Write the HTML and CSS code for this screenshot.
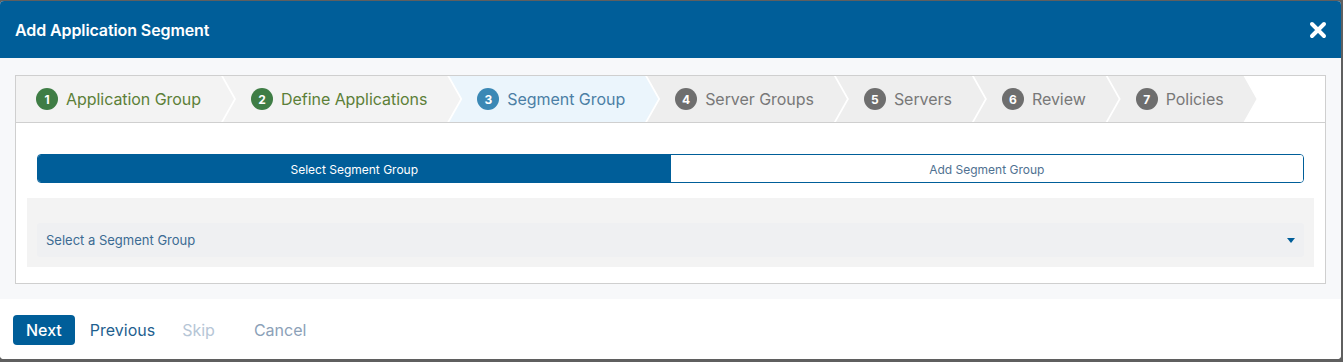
FILE: index.html
```html
<!DOCTYPE html>
<html lang="en">
<head>
<meta charset="utf-8">
<title>Add Application Segment</title>
<link rel="stylesheet" href="styles.css">
</head>
<body>
<div class="modal">
  <div class="header">
    <h1 class="title">Add Application Segment</h1>
    <button class="close" aria-label="Close">
      <svg width="18" height="18" viewBox="0 0 18 18"><path d="M3 3 L15 15 M15 3 L3 15" stroke="#fff" stroke-width="4" stroke-linecap="round" fill="none"/></svg>
    </button>
  </div>
  <div class="body">
    <div class="panel">
      <div class="steps">
        <div class="step done first"><span class="num">1</span><span class="label">Application Group</span></div>
        <div class="step done"><span class="num">2</span><span class="label">Define Applications</span></div>
        <div class="step active"><span class="num">3</span><span class="label">Segment Group</span></div>
        <div class="step"><span class="num">4</span><span class="label">Server Groups</span></div>
        <div class="step"><span class="num">5</span><span class="label">Servers</span></div>
        <div class="step"><span class="num">6</span><span class="label">Review</span></div>
        <div class="step"><span class="num">7</span><span class="label">Policies</span></div>
      </div>
      <div class="content">
        <div class="toggle">
          <div class="tab tab-active">Select Segment Group</div>
          <div class="tab">Add Segment Group</div>
        </div>
        <div class="field-box">
          <div class="select">
            <span class="placeholder">Select a Segment Group</span>
            <span class="caret"></span>
          </div>
        </div>
      </div>
    </div>
  </div>
  <div class="footer">
    <button class="btn-primary">Next</button>
    <button class="link link-prev">Previous</button>
    <button class="link link-skip">Skip</button>
    <button class="link link-cancel">Cancel</button>
  </div>
</div>
</body>
</html>
```

FILE: styles.css
```css
html, body {
  margin: 0;
  padding: 0;
}
body {
  background: #5f5f5f;
  font-family: Inter, "Liberation Sans", sans-serif;
  height: 362px;
  overflow: hidden;
}
.modal {
  margin: 1px 2px 0 0;
  height: 358px;
  border-radius: 4px;
  overflow: hidden;
  background: #fff;
  display: flex;
  flex-direction: column;
}
.header {
  height: 57px;
  background: #005e99;
  display: flex;
  align-items: center;
  justify-content: space-between;
  padding: 0 14px 0 15px;
  box-sizing: border-box;
}
.title {
  margin: 0;
  color: #fff;
  font-size: 16px;
  font-weight: 600;
  letter-spacing: -0.1px;
}
.close {
  background: none;
  border: 0;
  padding: 0;
  width: 18px;
  height: 18px;
  display: flex;
  cursor: pointer;
}
.body {
  background: #f7f8fa;
  padding: 17px 15px 15px 15px;
}
.panel {
  background: #fff;
  border: 1px solid #cfcfcf;
}
.steps {
  display: flex;
  height: 46px;
  border-bottom: 1px solid #cfcfcf;
  background: #fff;
}
.step {
  display: flex;
  align-items: center;
  gap: 8px;
  padding: 0 33px 0 28px;
  margin-left: -11px;
  background: #eeeeee;
  clip-path: polygon(0 0, calc(100% - 13px) 0, 100% 50%, calc(100% - 13px) 100%, 0 100%, 13px 50%);
  white-space: nowrap;
}
.step.first {
  margin-left: 0;
  padding-left: 20px;
  clip-path: polygon(0 0, calc(100% - 13px) 0, 100% 50%, calc(100% - 13px) 100%, 0 100%);
}
.num {
  width: 22px;
  height: 22px;
  border-radius: 50%;
  background: #6e6e6e;
  color: #fff;
  font-size: 12px;
  font-weight: 700;
  display: flex;
  align-items: center;
  justify-content: center;
}
.label {
  font-size: 16px;
  color: #787878;
  letter-spacing: -0.05px;
}
.step.done {
  background: #f3f3f3;
}
.step.done .num {
  background: #3f7d45;
}
.step.done .label {
  color: #5c7f38;
}
.step.active {
  background: #ebf5fc;
}
.step.active .num {
  background: #3b88b5;
}
.step.active .label {
  color: #4b7fa5;
}
.content {
  padding: 31px 11px 16px 11px;
}
.toggle {
  margin: 0 10px 15px 10px;
  height: 29px;
  box-sizing: border-box;
  border: 1px solid #005e99;
  border-radius: 4px;
  overflow: hidden;
  display: flex;
}
.tab {
  flex: 1;
  display: flex;
  align-items: center;
  justify-content: center;
  padding-top: 2px;
  font-size: 12px;
  color: #4f7191;
  background: #fff;
}
.tab-active {
  background: #005e99;
  color: #fff;
}
.field-box {
  background: #f3f3f3;
  padding: 25px 10px 10px 10px;
}
.select {
  height: 34px;
  background: #eff0f2;
  border-radius: 3px;
  display: flex;
  align-items: center;
  justify-content: space-between;
  padding: 0 9px 0 9px;
}
.placeholder {
  font-size: 13px;
  color: #3c6b92;
}
.caret {
  width: 0;
  height: 0;
  border-left: 4px solid transparent;
  border-right: 4px solid transparent;
  border-top: 5px solid #005e99;
}
.footer {
  flex: 1;
  background: #fff;
  display: flex;
  align-items: flex-start;
  padding: 16px 0 0 13px;
}
.btn-primary {
  height: 30px;
  padding: 0 13px;
  background: #005e99;
  color: #fff;
  border: 0;
  border-radius: 4px;
  font-family: inherit;
  font-size: 16px;
  font-weight: 500;
}
.link {
  height: 30px;
  background: none;
  border: 0;
  padding: 0 14px;
  font-family: inherit;
  font-size: 16px;
}
.link-prev {
  margin-left: 1px;
  color: #1f5f8f;
}
.link-skip {
  margin-left: -1px;
  color: #b6c6d6;
}
.link-cancel {
  margin-left: 11px;
  color: #8ca1b8;
}
```
